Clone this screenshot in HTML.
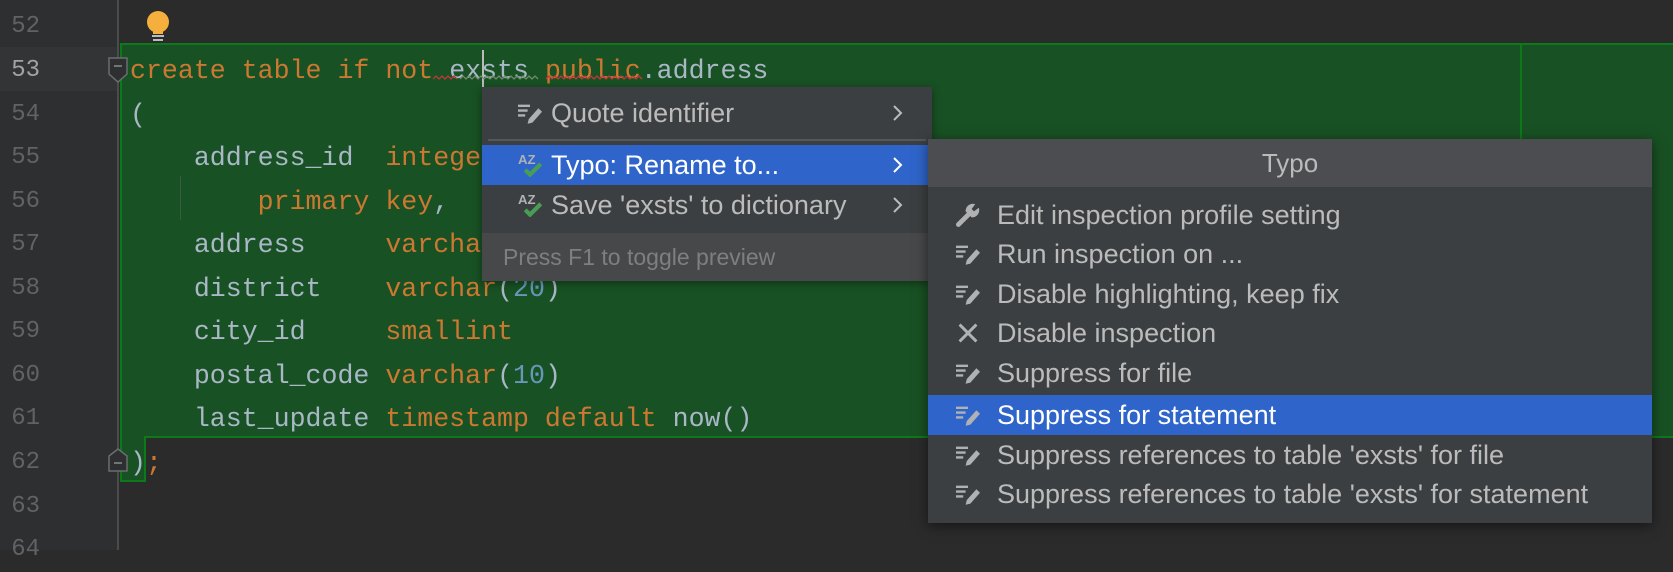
<!DOCTYPE html>
<html><head><meta charset="utf-8">
<style>
*{margin:0;padding:0;box-sizing:border-box}
body{width:1673px;height:550px;overflow:hidden;background:#2b2b2b;position:relative;font-family:"Liberation Sans",sans-serif}
.abs{position:absolute}
.ln{position:absolute;left:0;width:40px;text-align:right;font-family:"Liberation Mono",monospace;font-size:24px;color:#606366;line-height:44px;height:44px}
.code{position:absolute;left:130px;font-family:"Liberation Mono",monospace;font-size:26.6px;color:#a9b7c6;white-space:pre;line-height:44px;height:44px}
.k{color:#cc7832}.n{color:#6897bb}
.menu{position:absolute;background:#3c3f41;color:#bbbbbb;font-size:27px}
.row{position:absolute;left:0;right:0;height:40px;line-height:40px}
.row .t{position:absolute;white-space:nowrap}
.sel{background:#2f65ca;color:#fff}
.ic{position:absolute;top:8px;width:24px;height:24px}
.arr{position:absolute;right:28px;top:12px}
</style></head><body>
<div class="abs" style="left:0;top:0;width:118px;height:550px;background:#2e2f31"></div>
<div class="abs" style="left:0;top:47px;width:118px;height:44px;background:#333436"></div>
<div class="abs" style="left:117px;top:0;width:2px;height:550px;background:#4a4b4d"></div>
<div class="abs" style="left:120px;top:43px;width:1553px;height:395px;background:#185123;border-top:2px solid #0d7a1a;border-left:2px solid #0d7a1a;border-bottom:2px solid #0d7a1a"></div>
<div class="abs" style="left:120px;top:436px;width:26px;height:46px;background:#185123;border-left:2px solid #0d7a1a;border-bottom:2px solid #0d7a1a;border-right:2px solid #0d7a1a"></div>
<div class="abs" style="left:1520px;top:45px;width:2px;height:393px;background:#0d7a1a"></div>
<div class="ln" style="top:5px">52</div>
<div class="ln" style="top:49px;color:#a4a3a3">53</div>
<div class="ln" style="top:93px">54</div>
<div class="ln" style="top:136px">55</div>
<div class="ln" style="top:180px">56</div>
<div class="ln" style="top:223px">57</div>
<div class="ln" style="top:267px">58</div>
<div class="ln" style="top:310px">59</div>
<div class="ln" style="top:354px">60</div>
<div class="ln" style="top:397px">61</div>
<div class="ln" style="top:441px">62</div>
<div class="ln" style="top:485px">63</div>
<div class="ln" style="top:528px">64</div>
<svg class="abs" style="left:108px;top:57px" width="20" height="26"><path d="M1 1H19V17L10 25L1 17Z" fill="#2e2f31" stroke="#6b6d70" stroke-width="1.5"/><path d="M6 9H14" stroke="#8a8c8f" stroke-width="1.5"/></svg>
<svg class="abs" style="left:108px;top:448px" width="20" height="24"><path d="M1 23H19V8L10 1L1 8Z" fill="#2e2f31" stroke="#6b6d70" stroke-width="1.5"/><path d="M6 15H14" stroke="#8a8c8f" stroke-width="1.5"/></svg>
<div class="abs" style="left:180px;top:176px;width:1px;height:44px;background:#3d5a3f"></div>
<svg class="abs" style="left:146px;top:11px" width="24" height="31"><circle cx="12" cy="11" r="11" fill="#f4af3d"/><rect x="7" y="15" width="10" height="8" fill="#f4af3d"/><rect x="6" y="24" width="12" height="2" fill="#bbb"/><rect x="7" y="28" width="10" height="2" fill="#bbb"/></svg>
<div class="code" style="top:49px"><span class="k">create table if not </span>exsts <span class="k">public</span>.address</div>
<div class="abs" style="left:482px;top:50px;width:2px;height:40px;background:#bbbbbb"></div>
<svg class="abs" style="left:433px;top:75px" width="210" height="8"><path d="M0 4 l3 -3 l3 3 l3 -3 l3 3 l3 -3 l3 3 l3 -3 l3 3" fill="none" stroke="#c0383a" stroke-width="1.3"/><path d="M27 4 l3 -3 l3 3 l3 -3 l3 3 l3 -3 l3 3 l3 -3 l3 3 l3 -3 l3 3 l3 -3 l3 3 l3 -3 l3 3 l3 -3 l3 3 l3 -3 l3 3 l3 -3 l3 3 l3 -3 l3 3 l3 -3 l3 3 l3 -3 l3 3" fill="none" stroke="#6f8a6f" stroke-width="1.3"/><path d="M113 4 l3 -3 l3 3 l3 -3 l3 3 l3 -3 l3 3 l3 -3 l3 3 l3 -3 l3 3 l3 -3 l3 3 l3 -3 l3 3 l3 -3 l3 3 l3 -3 l3 3 l3 -3 l3 3 l3 -3 l3 3 l3 -3 l3 3 l3 -3 l3 3 l3 -3 l3 3 l3 -3 l3 3 l3 -3 l3 3" fill="none" stroke="#c0383a" stroke-width="1.3"/></svg>
<div class="code" style="top:93px">(</div>
<div class="code" style="top:136px">    address_id  <span class="k">integer</span></div>
<div class="code" style="top:180px">        <span class="k">primary key</span>,</div>
<div class="code" style="top:223px">    address     <span class="k">varchar</span>(<span class="n">50</span>)</div>
<div class="code" style="top:267px">    district    <span class="k">varchar</span>(<span class="n">20</span>)</div>
<div class="code" style="top:310px">    city_id     <span class="k">smallint</span></div>
<div class="code" style="top:354px">    postal_code <span class="k">varchar</span>(<span class="n">10</span>)</div>
<div class="code" style="top:397px">    last_update <span class="k">timestamp default </span>now()</div>
<div class="code" style="top:441px">)<span class="k">;</span></div>

<svg width="0" height="0" style="position:absolute">
<defs>
<g id="pen"><path d="M0 4H10M0 8H8M0 12H6" stroke="#afb1b3" stroke-width="2"/><path d="M8 19L9 15L17 6L20 9L12 18Z" fill="#afb1b3"/></g>
<g id="az"><text x="0" y="9" font-family="Liberation Sans" font-weight="bold" font-size="11" fill="#afb1b3">AZ</text><path d="M6 14L10 18L19 9" fill="none" stroke="#499c54" stroke-width="3.5"/></g>
<g id="chev"><path d="M2 1L9 8L2 15" fill="none" stroke="currentColor" stroke-width="2"/></g>
</defs></svg>

<div class="menu" style="left:482px;top:87px;width:450px;height:194px;box-shadow:0 2px 8px rgba(0,0,0,.4)">
  <div class="row" style="top:6px"><svg class="ic" style="left:36px" viewBox="0 0 20 20"><use href="#pen"/></svg><span class="t" style="left:69px">Quote identifier</span><svg class="arr" width="12" height="16" style="color:#bbb"><use href="#chev"/></svg></div>
  <div class="abs" style="left:6px;right:6px;top:52px;height:2px;background:#55585b"></div>
  <div class="row sel" style="top:58px"><svg class="ic" style="left:36px" viewBox="0 0 20 20"><use href="#az"/></svg><span class="t" style="left:69px">Typo: Rename to...</span><svg class="arr" width="12" height="16" style="color:#fff"><use href="#chev"/></svg></div>
  <div class="row" style="top:98px"><svg class="ic" style="left:36px" viewBox="0 0 20 20"><use href="#az"/></svg><span class="t" style="left:69px">Save 'exsts' to dictionary</span><svg class="arr" width="12" height="16" style="color:#bbb"><use href="#chev"/></svg></div>
  <div class="abs" style="left:0;right:0;top:146px;height:48px;background:#46484a;color:#7d7f81;font-size:23px;line-height:48px;padding-left:21px">Press F1 to toggle preview</div>
</div>

<div class="menu" style="left:928px;top:139px;width:724px;height:384px;box-shadow:0 3px 12px rgba(0,0,0,.5)">
  <div class="abs" style="left:0;right:0;top:0;height:48px;background:#4b4d51;text-align:center;line-height:48px;color:#bbbbbb;font-size:26px">Typo</div>
  <div class="row" style="top:56px"><svg class="ic" style="left:28px" viewBox="0 0 20 20"><path d="M2 18L11 9" stroke="#afb1b3" stroke-width="4" stroke-linecap="round"/><path d="M8 7A6 6 0 0 1 16 1L13 5L15 7L19 4A6 6 0 0 1 13 12Z" fill="#afb1b3"/></svg><span class="t" style="left:69px">Edit inspection profile setting</span></div>
  <div class="row" style="top:95px"><svg class="ic" style="left:28px" viewBox="0 0 20 20"><use href="#pen"/></svg><span class="t" style="left:69px">Run inspection on ...</span></div>
  <div class="row" style="top:135px"><svg class="ic" style="left:28px" viewBox="0 0 20 20"><use href="#pen"/></svg><span class="t" style="left:69px">Disable highlighting, keep fix</span></div>
  <div class="row" style="top:174px"><svg class="ic" style="left:28px" viewBox="0 0 20 20"><path d="M3 3L17 17M17 3L3 17" stroke="#afb1b3" stroke-width="2.5"/></svg><span class="t" style="left:69px">Disable inspection</span></div>
  <div class="row" style="top:214px"><svg class="ic" style="left:28px" viewBox="0 0 20 20"><use href="#pen"/></svg><span class="t" style="left:69px">Suppress for file</span></div>
  <div class="row sel" style="top:256px"><svg class="ic" style="left:28px" viewBox="0 0 20 20"><use href="#pen"/></svg><span class="t" style="left:69px">Suppress for statement</span></div>
  <div class="row" style="top:296px"><svg class="ic" style="left:28px" viewBox="0 0 20 20"><use href="#pen"/></svg><span class="t" style="left:69px">Suppress references to table 'exsts' for file</span></div>
  <div class="row" style="top:335px"><svg class="ic" style="left:28px" viewBox="0 0 20 20"><use href="#pen"/></svg><span class="t" style="left:69px">Suppress references to table 'exsts' for statement</span></div>
</div>
</body></html>
